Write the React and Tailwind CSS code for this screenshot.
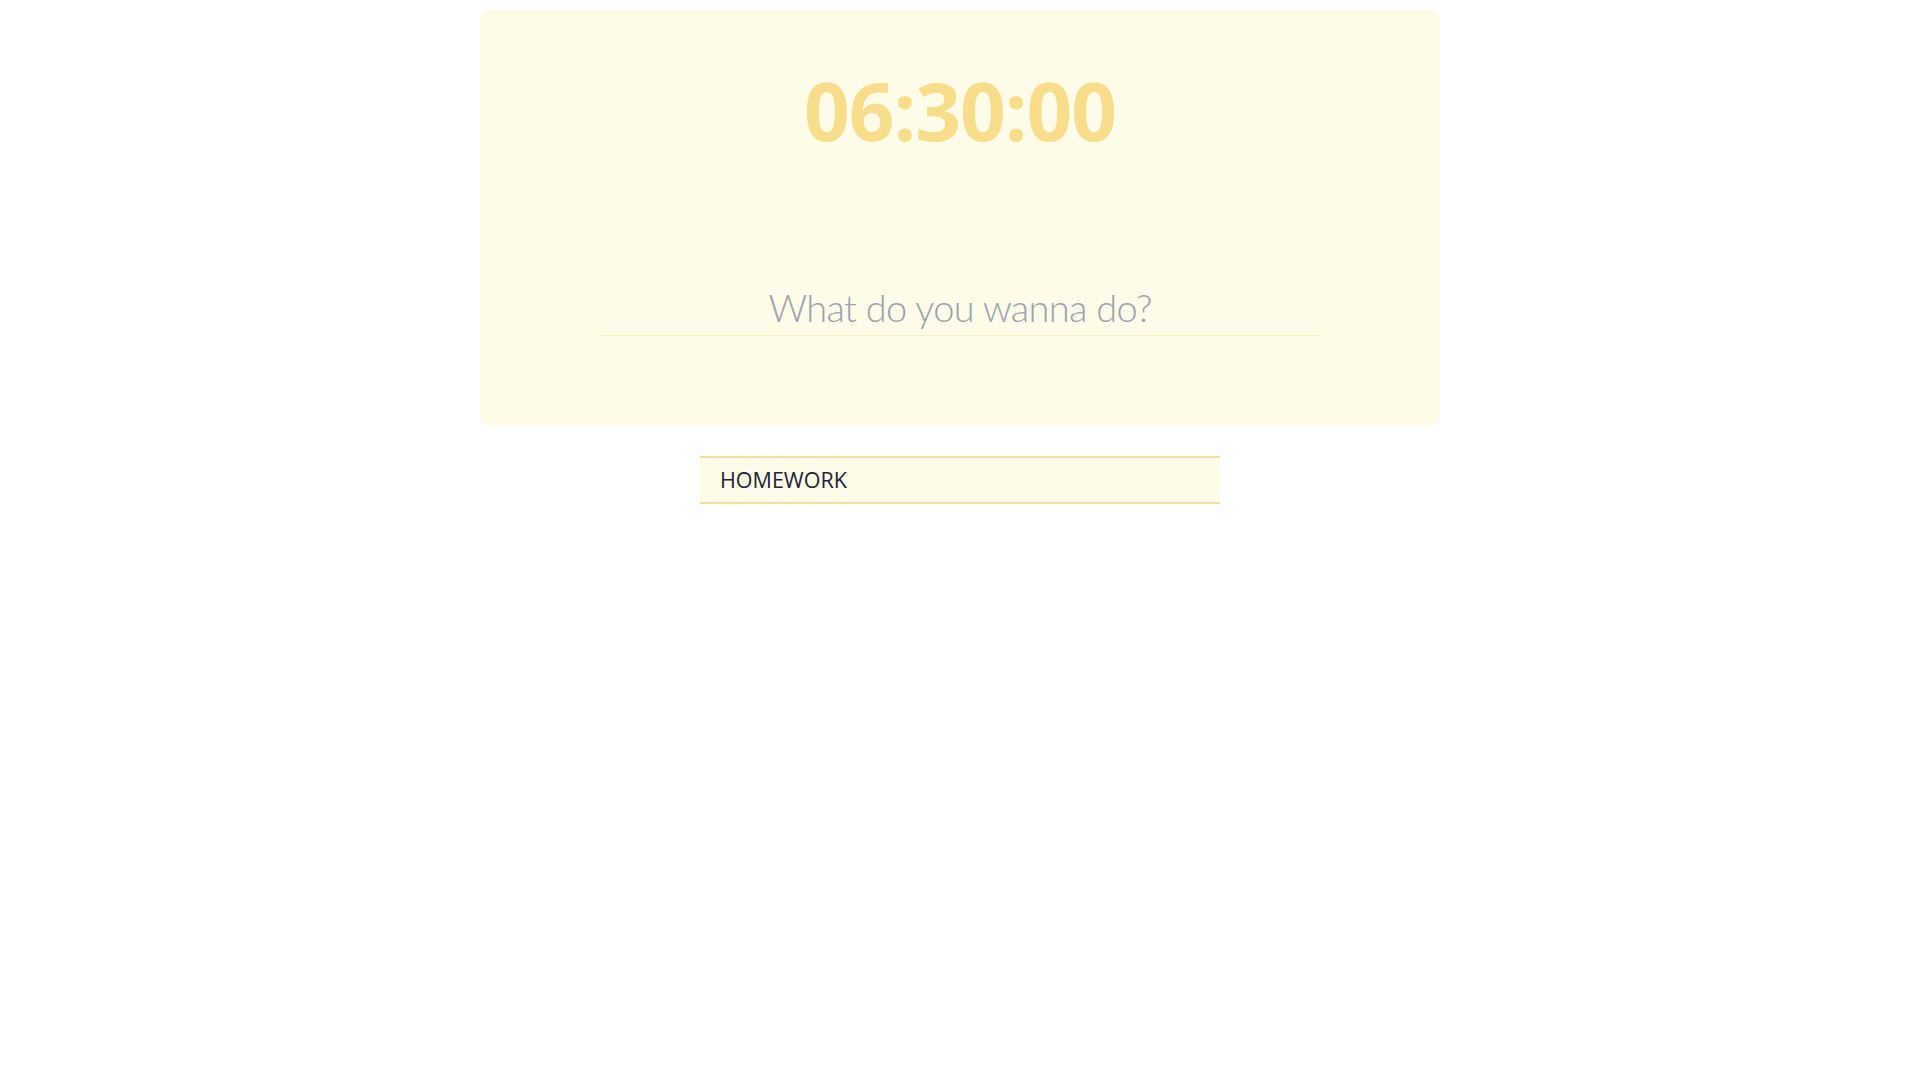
import React, { useState } from "react";

export default function App() {
  const [value, setValue] = useState("");
  return (
    <div className="min-h-screen bg-white flex flex-col items-center pt-[10px]" style={{ fontFamily: '"Open Sans", "Noto Sans", sans-serif' }}>
      <div className="w-[960px] h-[416px] bg-[#fefce8] rounded-lg flex flex-col items-center pt-[60px]">
        <div className="text-[80px] leading-[80px] font-bold text-[#f8de8a] tracking-[-1px]">06:30:00</div>
        <input
          value={value}
          onChange={(e) => setValue(e.target.value)}
          placeholder="What do you wanna do?"
          style={{ fontFamily: 'Lato, "Open Sans", sans-serif' }}
          className="mt-[130px] w-[720px] h-[56px] bg-transparent border-b border-[#fbf0c2] text-center text-[38px] tracking-[-0.7px] font-light text-gray-500 placeholder:text-[#9ca3af] outline-none"
        />
      </div>
      <div className="mt-[30px] w-[520px] h-[48px] bg-[#fefce8] border-y-2 border-[#f8e08e] flex items-center pl-5 text-[21.5px] text-[#1e2538]">
        HOMEWORK
      </div>
    </div>
  );
}
